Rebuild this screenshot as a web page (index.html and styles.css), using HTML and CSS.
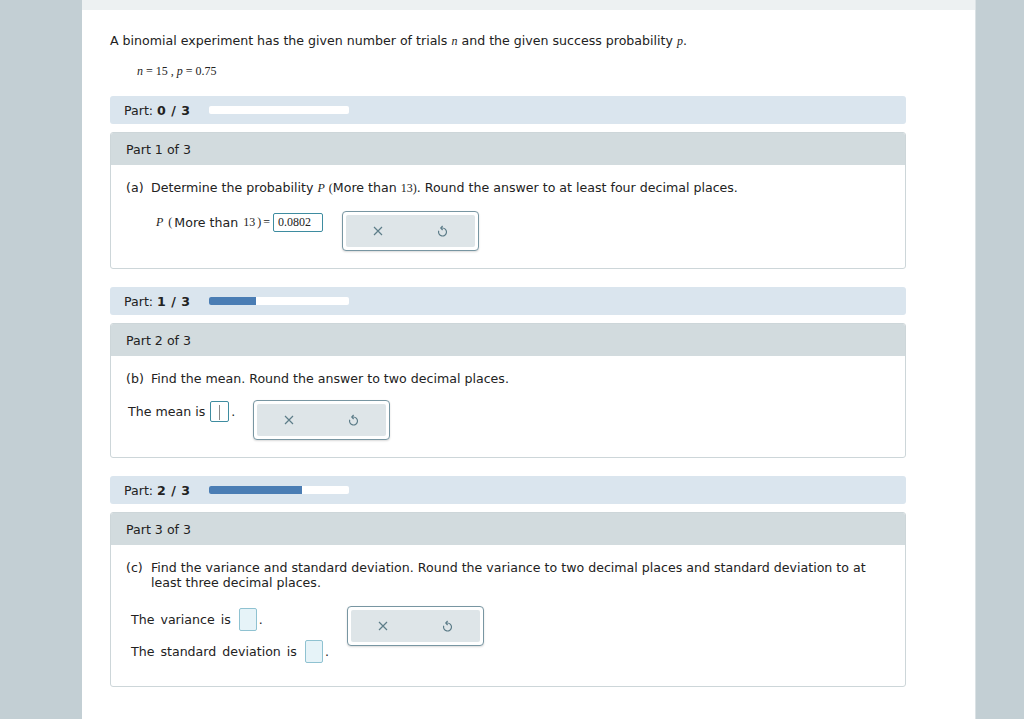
FILE: index.html
```html
<!DOCTYPE html>
<html>
<head>
<meta charset="utf-8">
<link rel="stylesheet" href="styles.css">
</head>
<body>
<div class="shell">
  <div class="page">
    <div class="strip"></div>
    <div class="content">
      <p class="intro">A binomial experiment has the given number of trials <i class="m">n</i> and the given success probability <i class="m">p</i>.</p>
      <p class="params"><span class="m"><i>n</i> = 15 , <i>p</i> = 0.75</span></p>

      <div class="partbar"><span class="plabel">Part: <b>0 / 3</b></span><div class="progress"><div class="fill" style="width:0%"></div></div></div>
      <div class="card">
        <div class="card-head">Part 1 of 3</div>
        <div class="card-body">
          <div class="q"><span class="ql">(a)</span><span class="qt">Determine the probability <i class="m">P</i> <span class="m">(</span>More than <span class="m">13</span><span class="m">)</span>. Round the answer to at least four decimal places.</span></div>
          <div class="row row-a">
            <div class="formula"><i class="m fp">P</i><span class="m fo">(</span><span class="fmt">More than</span><span class="m fn">13</span><span class="m fc">)</span><span class="m eq">=</span><span class="inp inp-val">0.0802</span></div>
            <div class="ansbox"><div class="ansin"><span class="btn"><svg width="10" height="10" viewBox="0 0 10 10"><path d="M1 1 L9 9 M9 1 L1 9" stroke="#5d7d89" stroke-width="1.2" fill="none"/></svg></span><span class="btn"><svg width="11" height="12" viewBox="0 0 11 12"><path d="M4 3 H5.5 A4 4 0 1 1 1.7 5.8" stroke="#5d7d89" stroke-width="1.2" fill="none"/><path d="M5.6 1 L3.8 3 L5.6 5" stroke="#5d7d89" stroke-width="1.2" fill="none"/></svg></span></div></div>
          </div>
        </div>
      </div>

      <div class="partbar"><span class="plabel">Part: <b>1 / 3</b></span><div class="progress"><div class="fill" style="width:33.3%"></div></div></div>
      <div class="card">
        <div class="card-head">Part 2 of 3</div>
        <div class="card-body">
          <div class="q"><span class="ql">(b)</span><span class="qt">Find the mean. Round the answer to two decimal places.</span></div>
          <div class="row row-b">
            <div class="formula">The mean is<span class="inp inp-cur"><span class="cursor"></span></span>.</div>
            <div class="ansbox"><div class="ansin"><span class="btn"><svg width="10" height="10" viewBox="0 0 10 10"><path d="M1 1 L9 9 M9 1 L1 9" stroke="#5d7d89" stroke-width="1.2" fill="none"/></svg></span><span class="btn"><svg width="11" height="12" viewBox="0 0 11 12"><path d="M4 3 H5.5 A4 4 0 1 1 1.7 5.8" stroke="#5d7d89" stroke-width="1.2" fill="none"/><path d="M5.6 1 L3.8 3 L5.6 5" stroke="#5d7d89" stroke-width="1.2" fill="none"/></svg></span></div></div>
          </div>
        </div>
      </div>

      <div class="partbar"><span class="plabel">Part: <b>2 / 3</b></span><div class="progress"><div class="fill" style="width:66.7%"></div></div></div>
      <div class="card card-c">
        <div class="card-head">Part 3 of 3</div>
        <div class="card-body">
          <div class="q"><span class="ql">(c)</span><span class="qt">Find the variance and standard deviation. Round the variance to two decimal places and standard deviation to at least three decimal places.</span></div>
          <div class="row row-c">
            <div class="lines">
              <div class="line">The variance is<span class="inp inp-empty"></span>.</div>
              <div class="line">The standard deviation is<span class="inp inp-empty"></span>.</div>
            </div>
            <div class="ansbox"><div class="ansin"><span class="btn"><svg width="10" height="10" viewBox="0 0 10 10"><path d="M1 1 L9 9 M9 1 L1 9" stroke="#5d7d89" stroke-width="1.2" fill="none"/></svg></span><span class="btn"><svg width="11" height="12" viewBox="0 0 11 12"><path d="M4 3 H5.5 A4 4 0 1 1 1.7 5.8" stroke="#5d7d89" stroke-width="1.2" fill="none"/><path d="M5.6 1 L3.8 3 L5.6 5" stroke="#5d7d89" stroke-width="1.2" fill="none"/></svg></span></div></div>
          </div>
        </div>
      </div>
    </div>
  </div>
</div>
</body>
</html>
```
FILE: styles.css
```css
html, body {
  margin: 0;
  padding: 0;
}
body {
  background: #c3cfd4;
  font-family: "DejaVu Sans", Verdana, sans-serif;
  font-size: 12.6px;
  color: #222;
}
.shell {
  padding-left: 82px;
}
.page {
  width: 894px;
  min-height: 719px;
  background: #fff;
  border-right: 1px solid #dbe2e5;
  box-sizing: border-box;
}
.strip {
  height: 10px;
  background: #edf1f2;
}
.content {
  padding: 0 69px 20px 28px;
}
p { margin: 0; }
.m {
  font-family: "Liberation Serif", "Times New Roman", serif;
  font-size: 12px;
}
i.m, .m i { font-style: italic; }
.intro {
  padding-top: 23px;
  line-height: 16px;
}
.params {
  padding: 14px 0 0 27px;
  line-height: 16px;
}
.partbar {
  margin-top: 17px;
  height: 28px;
  background: #dae5ee;
  border-radius: 3px;
  display: flex;
  align-items: center;
  padding-left: 14px;
}
.card + .partbar { margin-top: 18px; }
.plabel { width: 85px; }
.partbar b { letter-spacing: 0.5px; }
.progress {
  width: 140px;
  height: 8px;
  background: #fff;
  border-radius: 2px;
  overflow: hidden;
}
.fill {
  height: 100%;
  background: #4a7db4;
}
.card {
  margin-top: 8px;
  border: 1px solid #cdd6d9;
  border-radius: 3px;
  overflow: hidden;
}
.card-head {
  background: #d2dbde;
  height: 32px;
  line-height: 34px;
  padding-left: 15px;
}
.card-body {
  padding: 15px 15px 17px 15px;
}
.card-c .card-body { padding-bottom: 23px; }
.q {
  display: flex;
  line-height: 15px;
}
.ql {
  flex: 0 0 25px;
}
.qt { flex: 1; }
.row {
  display: flex;
  align-items: flex-start;
}
.row-a {
  margin-top: 16px;
  padding-left: 30px;
}
.formula {
  display: flex;
  align-items: center;
  white-space: nowrap;
}
.row-a .formula { height: 20px; }
.fo { margin-left: 5px; margin-right: 2px; }
.fn { margin-left: 5px; }
.fc { margin-left: 2px; }
.eq { margin: 0 3px 0 2px; }
.row-b {
  margin-top: 14px;
  padding-left: 2px;
}
.row-b .formula { height: 21px; margin-top: 1px; }
.inp {
  display: inline-block;
  box-sizing: border-box;
  border: 1px solid #3e8ca0;
  border-radius: 2px;
  background: #fff;
}
.inp-val {
  width: 50px;
  height: 19px;
  line-height: 17px;
  font-family: "Liberation Serif", "Times New Roman", serif;
  font-size: 12px;
  padding-left: 4px;
}
.inp-cur {
  width: 19px;
  height: 21px;
  margin-left: 5px;
  margin-right: 2px;
  position: relative;
}
.cursor {
  position: absolute;
  left: 8px;
  top: 3px;
  width: 1px;
  height: 13px;
  background: #888;
  border-top: 1px solid #888;
  border-bottom: 1px solid #888;
}
.inp-empty {
  width: 18px;
  height: 23px;
  background: #e6f3f8;
  border-color: #8fc2d1;
  margin-left: 8px;
  margin-right: 2px;
}
.ansbox {
  width: 137px;
  height: 40px;
  box-sizing: border-box;
  border: 1px solid #7896a2;
  border-radius: 4px;
  padding: 3px;
  background: #fff;
  box-shadow: 0 1px 2px rgba(0,0,0,0.15);
  flex: 0 0 auto;
}
.row-a .ansbox { margin-left: 19px; margin-top: -1px; }
.row-b .ansbox { margin-left: 18px; margin-top: 0; }
.ansin {
  height: 100%;
  background: #dee5e8;
  border-radius: 2px;
  display: flex;
}
.btn {
  flex: 1;
  display: flex;
  align-items: center;
  justify-content: center;
}
.row-c {
  margin-top: 17px;
  padding-left: 5px;
}
.lines {
  display: flex;
  flex-direction: column;
  gap: 9px;
  padding-top: 1px;
}
.line {
  height: 23px;
  display: flex;
  align-items: center;
  white-space: nowrap;
  word-spacing: 2px;
}
.row-c .ansbox { margin-left: 18px; margin-top: -1px; }
```
